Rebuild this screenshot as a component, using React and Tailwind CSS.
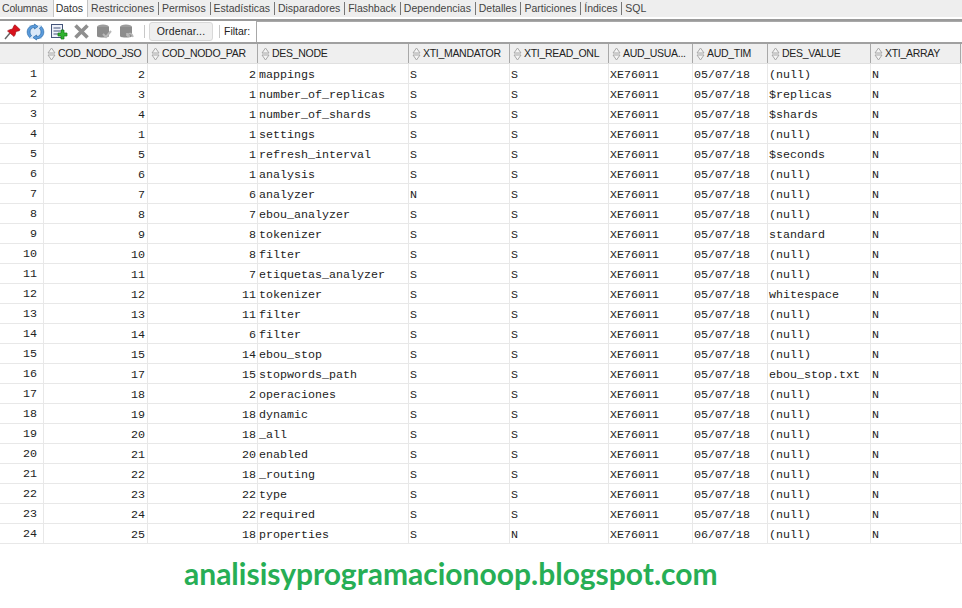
import React from "react";

const tabs = ["Columnas", "Datos", "Restricciones", "Permisos", "Estadísticas", "Disparadores", "Flashback", "Dependencias", "Detalles", "Particiones", "Índices", "SQL"];

const columns = [
  { name: "COD_NODO_JSO", width: "w-[104px]" },
  { name: "COD_NODO_PAR", width: "w-[110px]" },
  { name: "DES_NODE", width: "w-[151px]" },
  { name: "XTI_MANDATOR", width: "w-[101px]" },
  { name: "XTI_READ_ONL", width: "w-[99px]" },
  { name: "AUD_USUA...", width: "w-[84px]" },
  { name: "AUD_TIM", width: "w-[75px]" },
  { name: "DES_VALUE", width: "w-[103px]" },
  { name: "XTI_ARRAY", width: "w-[90px]" },
];

const rows = [
  [2, 2, "mappings", "S", "S", "05/07/18", "(null)"],
  [3, 1, "number_of_replicas", "S", "S", "05/07/18", "$replicas"],
  [4, 1, "number_of_shards", "S", "S", "05/07/18", "$shards"],
  [1, 1, "settings", "S", "S", "05/07/18", "(null)"],
  [5, 1, "refresh_interval", "S", "S", "05/07/18", "$seconds"],
  [6, 1, "analysis", "S", "S", "05/07/18", "(null)"],
  [7, 6, "analyzer", "N", "S", "05/07/18", "(null)"],
  [8, 7, "ebou_analyzer", "S", "S", "05/07/18", "(null)"],
  [9, 8, "tokenizer", "S", "S", "05/07/18", "standard"],
  [10, 8, "filter", "S", "S", "05/07/18", "(null)"],
  [11, 7, "etiquetas_analyzer", "S", "S", "05/07/18", "(null)"],
  [12, 11, "tokenizer", "S", "S", "05/07/18", "whitespace"],
  [13, 11, "filter", "S", "S", "05/07/18", "(null)"],
  [14, 6, "filter", "S", "S", "05/07/18", "(null)"],
  [15, 14, "ebou_stop", "S", "S", "05/07/18", "(null)"],
  [17, 15, "stopwords_path", "S", "S", "05/07/18", "ebou_stop.txt"],
  [18, 2, "operaciones", "S", "S", "05/07/18", "(null)"],
  [19, 18, "dynamic", "S", "S", "05/07/18", "(null)"],
  [20, 18, "_all", "S", "S", "05/07/18", "(null)"],
  [21, 20, "enabled", "S", "S", "05/07/18", "(null)"],
  [22, 18, "_routing", "S", "S", "05/07/18", "(null)"],
  [23, 22, "type", "S", "S", "05/07/18", "(null)"],
  [24, 22, "required", "S", "S", "05/07/18", "(null)"],
  [25, 18, "properties", "S", "N", "06/07/18", "(null)"],
];

function SortIcon() {
  return (
    <svg width="9" height="14" viewBox="0 0 9 14" className="shrink-0">
      <path d="M4.5 1 L8 6 H1 Z" fill="#f4f4f4" stroke="#a8a8a8" />
      <path d="M4.5 13 L8 8 H1 Z" fill="#f4f4f4" stroke="#a8a8a8" />
    </svg>
  );
}

function Toolbar() {
  return (
    <div className="flex items-center h-[21px] bg-white">
      <svg width="17" height="16" viewBox="0 0 17 16" className="ml-[4px]">
        <path d="M1 15 L6 9" stroke="#666" strokeWidth="1.4" />
        <path d="M3.5 7 C5 5.5 7 5.5 8.5 5 L10 1.5 L11 0.8 L16 5.5 L15.3 6.8 L12 7.5 C11.5 9 11.5 11 10 12.5 Z" fill="#d8121c" stroke="#9a0c12" strokeWidth="0.6" />
      </svg>
      <svg width="19" height="18" viewBox="0 0 19 18" className="ml-[5px]">
        <rect x="3" y="2" width="13" height="14" rx="1" fill="#d9e8f8" />
        <path d="M8.5 1 L12 3.5 L8.5 6 V4.5 C5.5 4.5 4 6.5 4 9 C4 10.5 4.6 11.8 5.6 12.7 L3.6 14.5 C2.2 13 1.2 11.2 1.2 9 C1.2 5 4.4 2.2 8.5 2.2 Z" fill="#5a9bdc" stroke="#2a6aa8" strokeWidth="0.7" />
        <path d="M10.5 17 L7 14.5 L10.5 12 V13.5 C13.5 13.5 15 11.5 15 9 C15 7.5 14.4 6.2 13.4 5.3 L15.4 3.5 C16.8 5 17.8 6.8 17.8 9 C17.8 13 14.6 15.8 10.5 15.8 Z" fill="#5a9bdc" stroke="#2a6aa8" strokeWidth="0.7" />
      </svg>
      <svg width="18" height="18" viewBox="0 0 18 18" className="ml-[5px]">
        <rect x="1.5" y="1.5" width="11" height="13" fill="#eef2fa" stroke="#44557a" />
        <path d="M3.5 5 H10.5 M3.5 8 H10.5 M3.5 11 H8" stroke="#44557a" />
        <path d="M11 7 H14 V10 H17 V13 H14 V16 H11 V13 H8 V10 H11 Z" fill="#2fb32f" stroke="#167a16" strokeWidth="0.7" />
      </svg>
      <svg width="17" height="17" viewBox="0 0 17 17" className="ml-[5px]">
        <path d="M2.5 2.5 L14.5 14.5 M14.5 2.5 L2.5 14.5" stroke="#8f8f8f" strokeWidth="3.6" />
      </svg>
      <svg width="18" height="18" viewBox="0 0 18 18" className="ml-[5px]">
        <ellipse cx="8" cy="4" rx="6" ry="2.5" fill="#9c9c9c" />
        <path d="M2 4 V13 C2 15 14 15 14 13 V4 Z" fill="#8c8c8c" />
        <path d="M8 11 L11 14 L16 8" stroke="#b9b9b9" strokeWidth="2" fill="none" />
      </svg>
      <svg width="18" height="18" viewBox="0 0 18 18" className="ml-[5px]">
        <ellipse cx="8" cy="4" rx="6" ry="2.5" fill="#9c9c9c" />
        <path d="M2 4 V13 C2 15 14 15 14 13 V4 Z" fill="#8c8c8c" />
        <path d="M9 13 C11 9 14 10 15 14 M9 13 L9 10 M9 13 L12 13" stroke="#b9b9b9" strokeWidth="1.6" fill="none" />
      </svg>
      <div className="ml-[8px] w-px h-[13px] bg-[#c8c8c8]" />
      <button className="ml-[4px] h-[19px] w-[64px] rounded-[3px] border border-[#d8d8d8] bg-[#efefef] text-[10.5px] text-[#222] tracking-[0.2px]">
        Ordenar...
      </button>
      <div className="ml-[6px] w-px h-[13px] bg-[#c8c8c8]" />
      <span className="ml-[4px] w-[31px] text-[10.5px] text-[#222]">Filtar:</span>
      <div className="ml-px h-[21px] flex-1 border-l border-t border-[#a8a8a8] bg-white" />
    </div>
  );
}

export default function App() {
  return (
    <div className="w-[962px] h-[608px] overflow-hidden bg-white font-['Liberation_Sans',sans-serif]">
      {/* pestañas */}
      <div className="flex items-center h-[19px] pl-px bg-[#eeeeee] border-b-2 border-white">
        {tabs.map((tab, i) => (
          <span
            key={tab}
            className={
              i === 1
                ? "h-[17px] pl-[2px] pr-[4px] bg-white border-x border-[#c4c4c4] text-[10.5px] leading-[17px] text-[#333]"
                : i === 0
                  ? "h-[13px] pl-px pr-[5px] text-[10.5px] tracking-[-0.2px] leading-[13px] text-[#444]"
                  : "h-[13px] pl-[3px] pr-[3.8px] border-r border-[#777] last:border-r-0 text-[10.5px] leading-[13px] text-[#444]"
            }
          >
            {tab}
          </span>
        ))}
      </div>
      <div className="h-[2px] bg-[#9a9a9a]" />
      <Toolbar />
      <div className="h-[2px] bg-[#a0a0a0]" />

      {/* cabecera */}
      <div className="flex h-[20px] bg-[#efefef] border-b border-[#e0e0e0]">
        <div className="w-[44px] border-r border-[#c8c8c8]" />
        {columns.map((col) => (
          <div
            key={col.name}
            className={`${col.width} flex items-center gap-[2px] pl-[3px] border-r border-[#a8a8a8] text-[10.5px] tracking-[-0.3px] text-[#222] overflow-hidden`}
          >
            <SortIcon />
            <span className="whitespace-nowrap">{col.name}</span>
          </div>
        ))}
      </div>

      {/* filas */}
      <div className="font-['Liberation_Mono',monospace] text-[11.67px] text-[#222]">
        {rows.map((row, i) => (
          <div key={i} className="flex h-[20px] items-center border-b border-[#e8e8e8]">
            <div className="w-[44px] h-full pr-[6px] text-right leading-[21px] border-r border-[#e8e8e8]">{i + 1}</div>
            <div className="w-[104px] h-full pr-[2px] text-right leading-[22px] border-r border-[#e8e8e8]">{row[0]}</div>
            <div className="w-[110px] h-full pr-[1px] text-right leading-[22px] border-r border-[#e8e8e8]">{row[1]}</div>
            <div className="w-[151px] h-full pl-[1px] leading-[22px] border-r border-[#e8e8e8]">{row[2]}</div>
            <div className="w-[101px] h-full pl-[1px] leading-[22px] border-r border-[#e8e8e8]">{row[3]}</div>
            <div className="w-[99px] h-full pl-[1px] leading-[22px] border-r border-[#e8e8e8]">{row[4]}</div>
            <div className="w-[84px] h-full pl-[1px] leading-[22px] border-r border-[#e8e8e8]">XE76011</div>
            <div className="w-[75px] h-full pl-[1px] leading-[22px] border-r border-[#e8e8e8]">{row[5]}</div>
            <div className="w-[103px] h-full pl-[1px] leading-[22px] border-r border-[#e8e8e8]">{row[6]}</div>
            <div className="w-[90px] h-full pl-[1px] leading-[22px] border-r border-[#e8e8e8]">N</div>
          </div>
        ))}
      </div>

      <div className="mt-[11px] pl-[184px] font-['Lato',sans-serif] font-bold text-[#27ae55] text-[30px] leading-[36px] whitespace-nowrap">
        analisisyprogramacionoop.blogspot.com
      </div>
    </div>
  );
}
